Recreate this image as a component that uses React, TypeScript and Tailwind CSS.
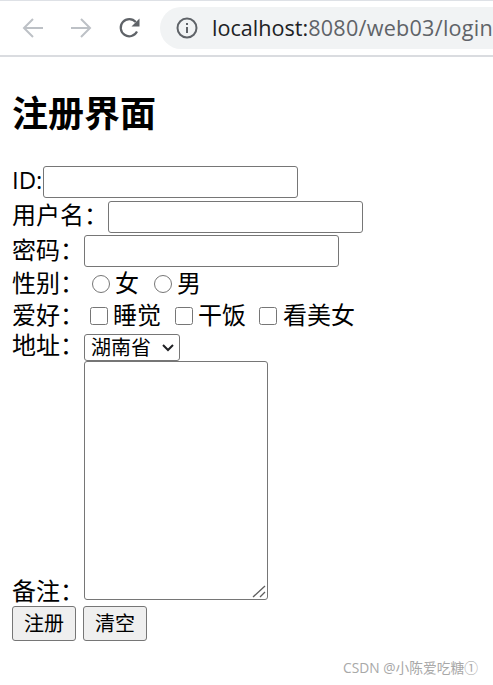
const cjk = "font-['Open_Sans','Noto_Sans_CJK_SC',sans-serif]";

function Toolbar() {
  return (
    <div className="flex h-[57px] items-center overflow-hidden border-t border-b-2 border-t-[#dee1e6] border-b-[#dadce0] bg-white">
      <div className="flex w-[162px] items-center pl-[21px]">
        <svg className="h-[24px] w-[24px]" viewBox="0 0 24 24" fill="none" stroke="#bdc1c6" strokeWidth="2">
          <path d="M22 12H3M12 3l-9 9 9 9" />
        </svg>
        <svg className="ml-[24px] h-[24px] w-[24px]" viewBox="0 0 24 24" fill="none" stroke="#bdc1c6" strokeWidth="2">
          <path d="M2 12h19M12 3l9 9-9 9" />
        </svg>
        <svg className="ml-[25px] h-[24px] w-[24px]" viewBox="0 0 24 24" fill="none">
          <path d="M19 15.5A8.6 8.6 0 1 1 17.8 6" stroke="#5f6368" strokeWidth="2.2" />
          <path d="M21.5 2.5v8h-8z" fill="#5f6368" />
        </svg>
      </div>
      <div className="flex h-[42px] flex-1 items-center rounded-l-full bg-[#f1f3f4] pl-[16px] font-['Open_Sans',sans-serif] text-[21.6px] whitespace-nowrap">
        <svg className="mr-[14px] h-[22px] w-[22px] shrink-0" viewBox="0 0 22 22" fill="none" stroke="#5f6368">
          <circle cx="11" cy="11" r="9.5" strokeWidth="2" />
          <path d="M11 10v6M11 6v2" strokeWidth="2" />
        </svg>
        <span className="text-[#202124]">localhost:</span>
        <span className="tracking-[0.25px] text-[#5f6368]">8080/web03/login</span>
      </div>
    </div>
  );
}

export default function App() {
  return (
    <div className={`relative h-[685px] w-[493px] overflow-hidden bg-white text-black ${cjk}`}>
      <Toolbar />
      <h1 className="mt-[36px] h-[42px] pl-[12px] text-[36px] leading-[42px] font-bold">注册界面</h1>
      <form className="mt-[31px] flex flex-col pl-[12px] text-[24px]">
        <div className="flex h-[35px] items-start leading-[28px]">
          <span className="w-[31px]">ID:</span>
          <input className="h-[32px] w-[255px] rounded-[3px] border border-[#767676]" />
        </div>
        <div className="flex h-[34px] items-start leading-[28px]">
          <span className="w-[96px]">用户名：</span>
          <input className="h-[32px] w-[255px] rounded-[3px] border border-[#767676]" />
        </div>
        <div className="flex h-[33px] items-start leading-[30px]">
          <span className="w-[72px]">密码：</span>
          <input className="h-[32px] w-[255px] rounded-[3px] border border-[#767676]" />
        </div>
        <div className="flex h-[32px] items-center">
          <span className="mb-[2px] w-[80px]">性别：</span>
          <input type="radio" name="sex" className="h-[18px] w-[18px]" />
          <span className="mb-[2px] ml-[5px] w-[39px]">女</span>
          <input type="radio" name="sex" className="h-[18px] w-[18px]" />
          <span className="mb-[2px] ml-[5px]">男</span>
        </div>
        <div className="flex h-[32px] items-center">
          <span className="mb-[2px] w-[78px]">爱好：</span>
          <input type="checkbox" className="h-[18px] w-[18px]" />
          <span className="mb-[2px] ml-[5px] w-[62px]">睡觉</span>
          <input type="checkbox" className="h-[18px] w-[18px]" />
          <span className="mb-[2px] ml-[5px] w-[61px]">干饭</span>
          <input type="checkbox" className="h-[18px] w-[18px]" />
          <span className="mb-[2px] ml-[6px]">看美女</span>
        </div>
        <div className="flex h-[29px] items-start">
          <span className="w-[72px] leading-[26px]">地址：</span>
          <div className="relative mt-[2px] h-[27px] w-[96px]">
            <select className="block h-[27px] w-[96px] appearance-none rounded-[3px] border border-[#767676] bg-white pl-[6px] text-[20px] leading-[24px]">
              <option>湖南省</option>
            </select>
            <svg className="pointer-events-none absolute top-[9px] right-[5px] h-[10px] w-[14px]" viewBox="0 0 14 10" fill="none" stroke="#202124" strokeWidth="2">
              <path d="M2 2l5 5 5-5" />
            </svg>
          </div>
        </div>
        <div className="flex h-[245px] items-start">
          <span className="mt-[214px] w-[72px] leading-[32px]">备注：</span>
          <div className="relative h-[239px] w-[184px]">
            <textarea className="block h-[239px] w-[184px] resize-none rounded-[3px] border border-[#767676]" />
            <svg className="pointer-events-none absolute right-[2px] bottom-[2px] h-[14px] w-[14px]" viewBox="0 0 14 14" fill="none" stroke="#5f5f5f" strokeWidth="1.3">
              <path d="M1 13L13 2M8 13l5-5" />
            </svg>
          </div>
        </div>
        <div className="flex gap-[7px]">
          <button type="button" className="h-[35px] w-[64px] rounded-[3px] border border-[#767676] bg-[#efefef] text-[20px]">注册</button>
          <button type="button" className="h-[35px] w-[64px] rounded-[3px] border border-[#767676] bg-[#efefef] text-[20px]">清空</button>
        </div>
      </form>
      <span className="absolute top-[658px] right-[15px] text-[13.75px] leading-[20px] text-[#a8a8a8]">CSDN @小陈爱吃糖①</span>
    </div>
  );
}
